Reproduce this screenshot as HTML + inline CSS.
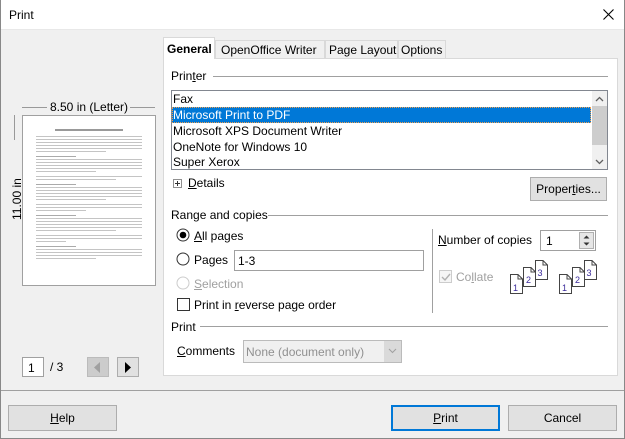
<!DOCTYPE html>
<html><head><meta charset="utf-8"><style>
*{box-sizing:border-box;margin:0;padding:0}
body{width:625px;height:439px;position:relative;overflow:hidden;background:#f0f0f0;font-family:"Liberation Sans",sans-serif;font-size:12px;color:#000}
.a{position:absolute;white-space:nowrap}
.btn{position:absolute;background:#e1e1e1;border:1px solid #adadad;text-align:center;font-size:12px}
.ln{position:absolute;height:1px;background:#a0a0a0}
.tx{position:absolute;height:1px;background:#c4c4c4}
u{text-decoration:underline}
</style></head><body>
<div class="a" style="left:0;top:0;width:625px;height:30px;background:#fff;border-bottom:1px solid #e8e8e8"></div>
<div class="a" style="left:9px;top:8px;font-size:12px">Print</div>
<svg class="a" style="left:603px;top:9px" width="11" height="11"><path d="M0.5 0.5L10.5 10.5M10.5 0.5L0.5 10.5" stroke="#000" stroke-width="1.1"/></svg>
<div class="a" style="left:0;top:0;width:625px;height:439px;border:1px solid #888;border-top:none"></div>

<!-- left preview -->
<div class="ln" style="left:22px;top:107px;width:25px;background:#999"></div>
<div class="a" style="left:50px;top:100px">8.50 in (Letter)</div>
<div class="ln" style="left:130px;top:107px;width:25px;background:#999"></div>
<div class="a" style="left:14px;top:115px;width:1px;height:25px;background:#999"></div>
<div class="a" style="left:-3px;top:193px;transform:rotate(-90deg);transform-origin:center;width:40px;text-align:center;line-height:14px;">11.00 in</div>
<div class="a" style="left:22px;top:115px;width:134px;height:171px;background:#fff;border:1px solid #a0a0a0"></div>
<div class="tx" style="left:55px;top:129px;width:68px;background:#999;height:2px"></div>
<div class="a" style="left:87px;top:357px;width:22px;height:20px;background:#ccc;border:1px solid #bbb"></div>
<div class="a" style="left:22px;top:357px;width:22px;height:20px;background:#fff;border:1px solid #a0a0a0;padding:3px 5px">1</div>
<div class="a" style="left:50px;top:360px">/ 3</div>
<svg class="a" style="left:94px;top:362px" width="8" height="11"><path d="M6 0L0 5.5L6 11Z" fill="#a0a0a0"/></svg>
<div class="a" style="left:117px;top:357px;width:22px;height:20px;background:#e1e1e1;border:1px solid #adadad"></div>
<svg class="a" style="left:125px;top:362px" width="8" height="11"><path d="M0 0L6 5.5L0 11Z" fill="#000"/></svg>

<!-- tabs -->
<div class="a" style="left:163px;top:58px;width:455px;height:318px;background:#fff;border:1px solid #d9d9d9"></div>
<div class="a" style="left:163px;top:37px;width:52px;height:22px;background:#fff;border:1px solid #d9d9d9;border-bottom:none;padding:4px 3px;font-weight:bold">General</div>
<div class="a" style="left:215px;top:40px;width:110px;height:19px;background:#f0f0f0;border:1px solid #d9d9d9;padding:2px 5px">OpenOffice Writer</div>
<div class="a" style="left:325px;top:40px;width:73px;height:19px;background:#f0f0f0;border:1px solid #d9d9d9;padding:2px 3px">Page Layout</div>
<div class="a" style="left:398px;top:40px;width:48px;height:19px;background:#f0f0f0;border:1px solid #d9d9d9;padding:2px 2px">Options</div>

<div class="a" style="left:171px;top:69px">Prin<u>t</u>er</div>
<div class="ln" style="left:213px;top:76px;width:395px"></div>
<div class="a" style="left:171px;top:90px;width:437px;height:80px;background:#fff;border:1px solid #828790"></div>
<div class="a" style="left:173px;top:91px;line-height:16px">Fax</div>
<div class="a" style="left:172px;top:107px;width:419px;height:16px;background:#0078d7;border:1px dotted #f0a050"></div>
<div class="a" style="left:173px;top:107px;line-height:16px;color:#fff">Microsoft Print to PDF</div>
<div class="a" style="left:173px;top:123px;line-height:16px">Microsoft XPS Document Writer</div>
<div class="a" style="left:173px;top:139px;line-height:16px">OneNote for Windows 10</div>
<div class="a" style="left:173px;top:155px;line-height:14px">Super Xerox</div>
<div class="a" style="left:592px;top:91px;width:15px;height:78px;background:#f0f0f0"></div>
<div class="a" style="left:592px;top:106px;width:15px;height:39px;background:#cdcdcd"></div>
<svg class="a" style="left:595px;top:96px" width="9" height="6"><path d="M1 5L4.5 1.5L8 5" stroke="#606060" fill="none" stroke-width="1.3"/></svg>
<svg class="a" style="left:595px;top:159px" width="9" height="6"><path d="M1 1L4.5 4.5L8 1" stroke="#606060" fill="none" stroke-width="1.3"/></svg>

<div class="a" style="left:173px;top:179px;width:9px;height:9px;border:1px solid #909090;background:#fff"></div>
<div class="a" style="left:175px;top:183px;width:5px;height:1px;background:#333"></div>
<div class="a" style="left:177px;top:181px;width:1px;height:5px;background:#333"></div>
<div class="a" style="left:188px;top:176px"><u>D</u>etails</div>
<div class="btn" style="left:530px;top:177px;width:77px;height:24px;line-height:22px">Proper<u>t</u>ies...</div>

<div class="a" style="left:171px;top:208px">Range and copies</div>
<div class="ln" style="left:268px;top:215px;width:340px"></div>
<svg class="a" style="left:176px;top:228px" width="14" height="14"><circle cx="7" cy="7" r="6" fill="#fff" stroke="#333"/><circle cx="7" cy="7" r="3.3" fill="#000"/></svg>
<div class="a" style="left:194px;top:229px"><u>A</u>ll pages</div>
<svg class="a" style="left:176px;top:252px" width="14" height="14"><circle cx="7" cy="7" r="6" fill="#fff" stroke="#333"/></svg>
<div class="a" style="left:194px;top:253px">Pa<u>g</u>es</div>
<div class="a" style="left:234px;top:250px;width:190px;height:21px;background:#fff;border:1px solid #a0a0a0;padding:3px 3px">1-3</div>
<svg class="a" style="left:176px;top:276px" width="14" height="14"><circle cx="7" cy="7" r="6" fill="#fff" stroke="#ccc"/></svg>
<div class="a" style="left:194px;top:277px;color:#a0a0a0"><u>S</u>election</div>
<div class="a" style="left:177px;top:298px;width:13px;height:13px;background:#fff;border:1px solid #333"></div>
<div class="a" style="left:194px;top:298px">Print in <u>r</u>everse page order</div>
<div class="a" style="left:432px;top:229px;width:1px;height:84px;background:#a0a0a0"></div>
<div class="a" style="left:438px;top:233px"><u>N</u>umber of copies</div>
<div class="a" style="left:540px;top:230px;width:56px;height:21px;background:#fff;border:1px solid #a0a0a0;padding:3px 5px">1</div>
<div class="a" style="left:579px;top:232px;width:15px;height:17px;background:#e6e6e6;border:1px solid #b0b0b0"></div>
<svg class="a" style="left:582px;top:234px" width="9" height="13"><path d="M1.5 4.5L4.5 1.5L7.5 4.5ZM1.5 8.5L4.5 11.5L7.5 8.5Z" fill="#333"/></svg>
<div class="a" style="left:439px;top:270px;width:13px;height:13px;background:#f5f5f5;border:1px solid #ccc"></div>
<svg class="a" style="left:440px;top:271px" width="12" height="12"><path d="M2 6L5 9L10 3" stroke="#b0b0b0" fill="none" stroke-width="1.4"/></svg>
<div class="a" style="left:456px;top:270px;color:#a0a0a0">Co<u>l</u>late</div>
<svg class="a" style="left:509px;top:259px" width="110" height="36">
<g font-family="Liberation Sans" font-size="9" fill="#3a2a9a">
<g transform="translate(0,0)">
<path d="M26.5 1.5H34L38.5 6V20.5H26.5Z" fill="#fff" stroke="#444"/><path d="M34 1.5V6H38.5" fill="none" stroke="#444"/><text x="28.5" y="17">3</text>
<path d="M14.5 8.5H22L26.5 13V27.5H14.5Z" fill="#fff" stroke="#444"/><path d="M22 8.5V13H26.5" fill="none" stroke="#444"/><text x="17" y="24">2</text>
<path d="M1.5 15.5H9L13.5 20V34.5H1.5Z" fill="#fff" stroke="#444"/><path d="M9 15.5V20H13.5" fill="none" stroke="#444"/><text x="4" y="32">1</text>
</g>
<g transform="translate(49,0)">
<path d="M26.5 1.5H34L38.5 6V20.5H26.5Z" fill="#fff" stroke="#444"/><path d="M34 1.5V6H38.5" fill="none" stroke="#444"/><text x="28.5" y="17">3</text>
<path d="M14.5 8.5H22L26.5 13V27.5H14.5Z" fill="#fff" stroke="#444"/><path d="M22 8.5V13H26.5" fill="none" stroke="#444"/><text x="17" y="24">2</text>
<path d="M1.5 15.5H9L13.5 20V34.5H1.5Z" fill="#fff" stroke="#444"/><path d="M9 15.5V20H13.5" fill="none" stroke="#444"/><text x="4" y="32">1</text>
</g></g></svg>

<div class="a" style="left:171px;top:320px">Print</div>
<div class="ln" style="left:200px;top:326px;width:408px"></div>
<div class="a" style="left:177px;top:344px"><u>C</u>omments</div>
<div class="a" style="left:243px;top:340px;width:159px;height:23px;background:#f0f0f0;border:1px solid #bbb;padding:4px 2px;color:#909090">None (document only)</div>
<div class="a" style="left:384px;top:341px;width:17px;height:21px;background:#dadada"></div>
<svg class="a" style="left:388px;top:348px" width="9" height="6"><path d="M1 1L4.5 4.5L8 1" stroke="#a0a0a0" fill="none"/></svg>

<div class="a" style="left:1px;top:390px;width:623px;height:1px;background:#a0a0a0"></div>
<div class="btn" style="left:8px;top:405px;width:109px;height:26px;line-height:24px"><u>H</u>elp</div>
<div class="btn" style="left:391px;top:405px;width:109px;height:26px;line-height:22px;border:2px solid #0078d7"><u>P</u>rint</div>
<div class="btn" style="left:508px;top:405px;width:109px;height:26px;line-height:24px">Cancel</div>

<!-- preview text lines -->
<div class="tx" style="left:36px;top:136px;width:106px"></div><div class="tx" style="left:36px;top:139px;width:106px"></div><div class="tx" style="left:36px;top:142px;width:106px"></div><div class="tx" style="left:36px;top:145px;width:106px"></div><div class="tx" style="left:36px;top:148px;width:106px"></div><div class="tx" style="left:36px;top:151px;width:70px"></div>
<div class="tx" style="left:36px;top:156px;width:40px;background:#aaa"></div>
<div class="tx" style="left:36px;top:159px;width:106px"></div><div class="tx" style="left:36px;top:162px;width:106px"></div><div class="tx" style="left:36px;top:165px;width:106px"></div><div class="tx" style="left:36px;top:168px;width:106px"></div><div class="tx" style="left:36px;top:171px;width:60px"></div>
<div class="tx" style="left:36px;top:176px;width:106px"></div><div class="tx" style="left:36px;top:179px;width:80px"></div>
<div class="tx" style="left:36px;top:184px;width:40px;background:#aaa"></div>
<div class="tx" style="left:36px;top:187px;width:106px"></div><div class="tx" style="left:36px;top:190px;width:106px"></div><div class="tx" style="left:36px;top:193px;width:106px"></div><div class="tx" style="left:36px;top:196px;width:106px"></div><div class="tx" style="left:36px;top:199px;width:70px"></div>
<div class="tx" style="left:36px;top:204px;width:106px"></div><div class="tx" style="left:36px;top:207px;width:106px"></div><div class="tx" style="left:36px;top:210px;width:50px"></div>
<div class="tx" style="left:36px;top:215px;width:40px;background:#aaa"></div>
<div class="tx" style="left:36px;top:218px;width:106px"></div><div class="tx" style="left:36px;top:221px;width:106px"></div><div class="tx" style="left:36px;top:224px;width:106px"></div><div class="tx" style="left:36px;top:227px;width:106px"></div><div class="tx" style="left:36px;top:230px;width:80px"></div>
<div class="tx" style="left:36px;top:235px;width:106px"></div><div class="tx" style="left:36px;top:238px;width:106px"></div><div class="tx" style="left:36px;top:241px;width:30px"></div>
<div class="tx" style="left:36px;top:246px;width:40px;background:#aaa"></div>
<div class="tx" style="left:36px;top:249px;width:106px"></div><div class="tx" style="left:36px;top:252px;width:106px"></div><div class="tx" style="left:36px;top:255px;width:106px"></div><div class="tx" style="left:36px;top:258px;width:60px"></div>
</body></html>
